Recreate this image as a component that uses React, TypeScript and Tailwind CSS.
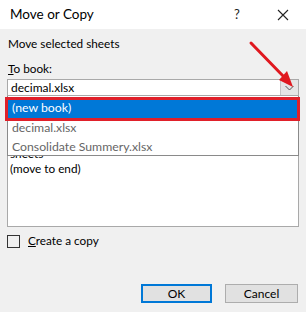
import React from "react";

export default function App() {
  const font = { fontFamily: 'Lato, "Noto Sans", sans-serif' };
  return (
    <div className="w-[306px] h-[312px] bg-[#f0f0f0] flex flex-col text-[11.75px] text-black relative overflow-hidden" style={font}>
      {/* title bar */}
      <div className="h-[29px] bg-white flex items-center pl-[10px] shrink-0">
        <span className="text-[13.5px] flex-1">Move or Copy</span>
        <span className="w-[46px] text-center text-[13px] text-[#222]">?</span>
        <span className="w-[46px] flex justify-center">
          <svg width="12" height="12" viewBox="0 0 12 12"><path d="M1 1 L11 11 M11 1 L1 11" stroke="#222" strokeWidth="1.1" /></svg>
        </span>
      </div>
      <div className="flex flex-col px-[7px] relative">
        <div className="h-[16px] mt-[7px] pl-[1px] leading-[16px]">Move selected sheets</div>
        <div className="h-[16px] mt-[9px] pl-[1px] leading-[16px]"><span className="underline">T</span>o book:</div>
        {/* combo */}
        <div className="relative mt-[2px]">
          <div className="h-[17px] bg-white border border-[#a9a9a9] flex items-stretch">
            <span className="flex-1 pl-[3px] leading-[15px] text-[12px]">decimal.xlsx</span>
            <span className="w-[18px] bg-[#e5e5e5] border-l border-[#c4c4c4] flex items-center justify-center">
              <svg width="9" height="6" viewBox="0 0 9 6"><path d="M0.5 1 L4.5 5 L8.5 1" fill="none" stroke="#555" strokeWidth="1" /></svg>
            </span>
          </div>
          {/* dropdown list */}
          <div className="absolute left-0 right-0 top-full z-10 h-[60px] bg-white border border-[#8a8a8a] border-t-0 flex flex-col pt-[2px]">
            <div className="h-[20px] bg-[#0078d7] text-white text-[12.25px] leading-[20px] pl-[4px]">(new book)</div>
            <div className="h-[19px] text-[#666] text-[12.25px] leading-[19px] pl-[4px]">decimal.xlsx</div>
            <div className="h-[19px] text-[#666] text-[12.25px] leading-[19px] pl-[4px]">Consolidate Summery.xlsx</div>
          </div>
          {/* red highlight */}
          <div className="absolute left-[-2px] right-[-1px] top-[18px] h-[24px] border-[3px] border-[#e0202a] z-20" />
        </div>
        <div className="h-[83px] bg-white border border-[#a9a9a9] mt-[48px] flex flex-col pt-[1px] pl-[2px]">
          <div className="h-[15px] leading-[15px]">sheets</div>
          <div className="h-[15px] leading-[15px]">(move to end)</div>
        </div>
        <div className="flex items-center mt-[7px] h-[14px]">
          <span className="w-[13px] h-[13px] border border-[#333] bg-[#f0f0f0]" />
          <span className="ml-[8px]"><span className="underline">C</span>reate a copy</span>
        </div>
        <div className="flex justify-end mt-[36px] gap-[13px] pr-[1px]">
          <button className="w-[71px] h-[19px] bg-[#e1e1e1] border-2 border-[#0078d7] text-[12px] leading-[15px]">OK</button>
          <button className="w-[73px] h-[19px] bg-[#e1e1e1] border border-[#adadad] text-[12px] leading-[17px]">Cancel</button>
        </div>
      </div>
      {/* red arrow */}
      <svg className="absolute left-0 top-0 z-30 pointer-events-none" width="306" height="312" viewBox="0 0 306 312">
        <line x1="251" y1="43" x2="285" y2="78" stroke="#e0181f" strokeWidth="3" strokeLinecap="round" />
        <polygon points="293,87 279,80 287,71" fill="#e0181f" />
      </svg>
    </div>
  );
}
